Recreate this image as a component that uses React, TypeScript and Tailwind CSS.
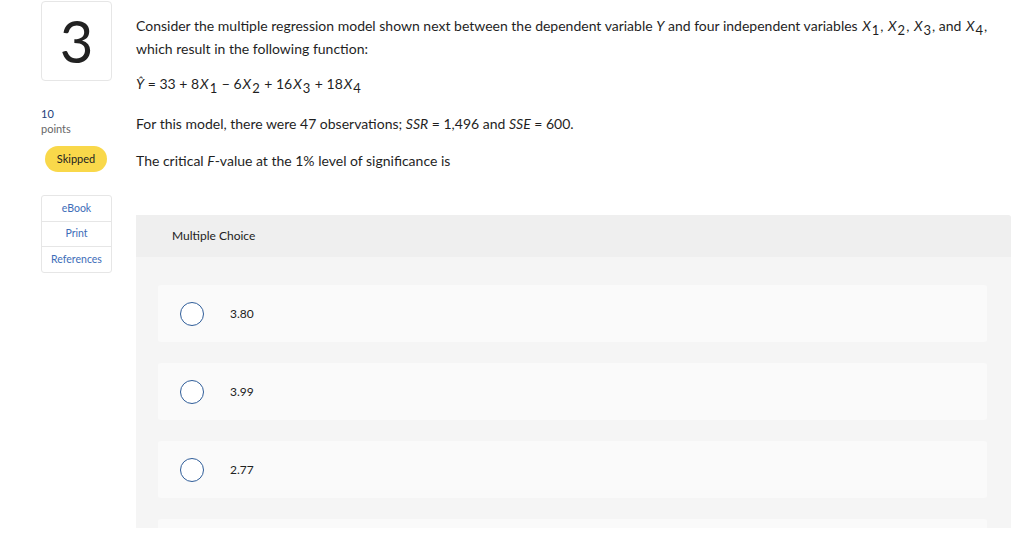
import React from 'react';

const Var = ({ v, sub }: { v: string; sub?: string }) => (
  <span className="inline-block mx-[1px]">
    <i>{v}</i>
    {sub && <span className="text-[13px] leading-none ml-[1px] align-[-4px]">{sub}</span>}
  </span>
);

const options = ['3.80', '3.99', '2.77', '4.22'];

export default function App() {
  return (
    <div className="w-[1024px] h-[540px] bg-white overflow-hidden flex text-[#1f1f1f] font-['Lato','Open_Sans',sans-serif]">
      {/* left rail */}
      <div className="w-[136px] shrink-0 pl-[41px] pt-[1px]">
        <div className="w-[71px] h-[80px] rounded-[4px] border border-[#e6e6e6] flex items-center justify-center">
          <span className="text-[58px] leading-none text-[#222] font-normal">3</span>
        </div>
        <div className="mt-[25px] text-[11px] leading-[15px]">
          <div className="text-[#1d3f7c]">10</div>
          <div className="text-[#666]">points</div>
        </div>
        <div className="mt-[10px] ml-[4px] w-[62px] h-[26px] rounded-full bg-[#f9d84a] flex items-center justify-center text-[11px] text-[#222]">
          Skipped
        </div>
        <div className="mt-[23px] w-[71px] rounded-[3px] border border-[#e6e6e6] text-[10.5px] text-[#3d6db8]">
          <div className="h-[26px] flex items-center justify-center border-b border-[#e6e6e6]">eBook</div>
          <div className="h-[25px] flex items-center justify-center border-b border-[#e6e6e6]">Print</div>
          <div className="h-[25px] flex items-center justify-center">References</div>
        </div>
      </div>

      {/* question */}
      <div className="w-[875px] shrink-0 pt-[14px]">
        <div className="text-[14px] leading-[23px]">
          <p>
            Consider the multiple regression model shown next between the dependent variable <i>Y</i> and four
            independent variables <Var v="X" sub="1" />, <Var v="X" sub="2" />, <Var v="X" sub="3" />, and{' '}
            <Var v="X" sub="4" />, which result in the following function:
          </p>
          <p className="mt-[12px]">
            <i>Ŷ</i> = 33 + 8<Var v="X" sub="1" /> − 6<Var v="X" sub="2" /> + 16<Var v="X" sub="3" /> + 18
            <Var v="X" sub="4" />
          </p>
          <p className="mt-[17px]">
            For this model, there were 47 observations; <i>SSR</i> = 1,496 and <i>SSE</i> = 600.
          </p>
          <p className="mt-[14px]">
            The critical <i>F</i>-value at the 1% level of significance is
          </p>
        </div>

        <div className="mt-[43px] h-[313px] overflow-hidden rounded-tr-[3px] bg-[#f5f5f5]">
          <div className="h-[42px] bg-[#efefef] flex items-center pl-[36px] text-[12px] text-[#222]">
            Multiple Choice
          </div>
          <div className="pt-[28px] pl-[22px] pr-[24px] flex flex-col gap-[21px]">
            {options.map((o) => (
              <div key={o} className="h-[57px] shrink-0 rounded-[3px] bg-[#fafafa] flex items-center pl-[22px]">
                <span className="w-[24px] h-[24px] shrink-0 rounded-full border border-[#2f5d99] bg-white" />
                <span className="ml-[26px] text-[12px] text-[#222]">{o}</span>
              </div>
            ))}
          </div>
        </div>
      </div>
    </div>
  );
}
